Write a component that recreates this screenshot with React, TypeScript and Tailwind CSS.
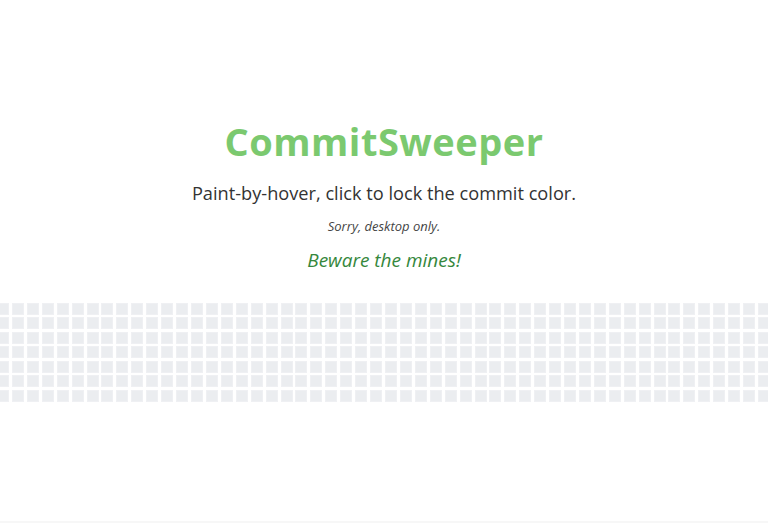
import React from "react";

const COLS = 53;
const ROWS = 7;

export default function App() {
  const cols = Array.from({ length: COLS });
  const rows = Array.from({ length: ROWS });
  return (
    <div className="w-full h-[523px] bg-white overflow-hidden flex flex-col" style={{ fontFamily: "'Open Sans', 'Liberation Sans', sans-serif" }}>
      <div className="flex flex-col items-center pt-[116px]">
        <h1 className="text-[38px] leading-[50px] font-bold text-[#7bc96f] tracking-[0.5px]">CommitSweeper</h1>
        <p className="mt-[15px] text-[18.2px] leading-[24px] text-[#333]">Paint-by-hover, click to lock the commit color.</p>
        <p className="mt-[13px] text-[13px] leading-[16px] italic text-[#444]">Sorry, desktop only.</p>
        <p className="mt-[14px] text-[19px] leading-[24px] italic text-[#35873c]">Beware the mines!</p>
      </div>
      <div className="mt-[31px] w-full overflow-hidden">
        <div className="ml-[-3px] grid grid-flow-col grid-rows-[repeat(7,12px)] auto-cols-[12px] gap-x-[2.93px] gap-y-[2.45px] w-max">
          {cols.map((_, c) =>
            rows.map((_, r) => (
              <div key={`${c}-${r}`} className="w-[12px] h-[12px] bg-[#ebedf0] border border-[#eff0f3]" />
            ))
          )}
        </div>
      </div>
      <div className="flex-1" />
      <div className="h-[2px] bg-[#f7f7f7]" />
    </div>
  );
}
